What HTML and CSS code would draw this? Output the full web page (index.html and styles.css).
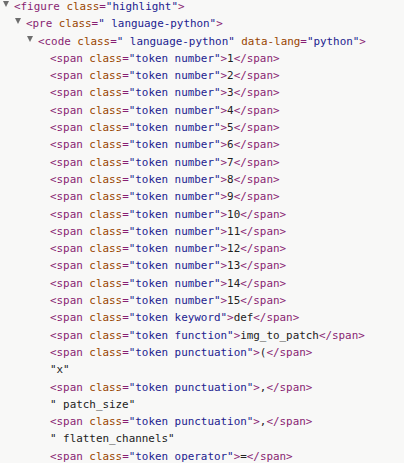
FILE: index.html
```html
<!DOCTYPE html>
<html>
<head>
<meta charset="utf-8">
<link rel="stylesheet" href="styles.css">
</head>
<body>
<div class="tree">
  <div class="row l0"><span class="tw"></span><span class="tg">&lt;figure</span> <span class="an">class</span><span class="tg">=</span><span class="av">"highlight"</span><span class="tg">&gt;</span></div>
  <div class="row l1"><span class="tw"></span><span class="tg">&lt;pre</span> <span class="an">class</span><span class="tg">=</span><span class="av">" language-python"</span><span class="tg">&gt;</span></div>
  <div class="row l2"><span class="tw"></span><span class="tg">&lt;code</span> <span class="an">class</span><span class="tg">=</span><span class="av">" language-python"</span> <span class="an">data-lang</span><span class="tg">=</span><span class="av">"python"</span><span class="tg">&gt;</span></div>
  <div class="row l3"><span class="tg">&lt;span</span> <span class="an">class</span><span class="tg">=</span><span class="av">"token number"</span><span class="tg">&gt;</span>1<span class="tg">&lt;/span&gt;</span></div>
  <div class="row l3"><span class="tg">&lt;span</span> <span class="an">class</span><span class="tg">=</span><span class="av">"token number"</span><span class="tg">&gt;</span>2<span class="tg">&lt;/span&gt;</span></div>
  <div class="row l3"><span class="tg">&lt;span</span> <span class="an">class</span><span class="tg">=</span><span class="av">"token number"</span><span class="tg">&gt;</span>3<span class="tg">&lt;/span&gt;</span></div>
  <div class="row l3"><span class="tg">&lt;span</span> <span class="an">class</span><span class="tg">=</span><span class="av">"token number"</span><span class="tg">&gt;</span>4<span class="tg">&lt;/span&gt;</span></div>
  <div class="row l3"><span class="tg">&lt;span</span> <span class="an">class</span><span class="tg">=</span><span class="av">"token number"</span><span class="tg">&gt;</span>5<span class="tg">&lt;/span&gt;</span></div>
  <div class="row l3"><span class="tg">&lt;span</span> <span class="an">class</span><span class="tg">=</span><span class="av">"token number"</span><span class="tg">&gt;</span>6<span class="tg">&lt;/span&gt;</span></div>
  <div class="row l3"><span class="tg">&lt;span</span> <span class="an">class</span><span class="tg">=</span><span class="av">"token number"</span><span class="tg">&gt;</span>7<span class="tg">&lt;/span&gt;</span></div>
  <div class="row l3"><span class="tg">&lt;span</span> <span class="an">class</span><span class="tg">=</span><span class="av">"token number"</span><span class="tg">&gt;</span>8<span class="tg">&lt;/span&gt;</span></div>
  <div class="row l3"><span class="tg">&lt;span</span> <span class="an">class</span><span class="tg">=</span><span class="av">"token number"</span><span class="tg">&gt;</span>9<span class="tg">&lt;/span&gt;</span></div>
  <div class="row l3"><span class="tg">&lt;span</span> <span class="an">class</span><span class="tg">=</span><span class="av">"token number"</span><span class="tg">&gt;</span>10<span class="tg">&lt;/span&gt;</span></div>
  <div class="row l3"><span class="tg">&lt;span</span> <span class="an">class</span><span class="tg">=</span><span class="av">"token number"</span><span class="tg">&gt;</span>11<span class="tg">&lt;/span&gt;</span></div>
  <div class="row l3"><span class="tg">&lt;span</span> <span class="an">class</span><span class="tg">=</span><span class="av">"token number"</span><span class="tg">&gt;</span>12<span class="tg">&lt;/span&gt;</span></div>
  <div class="row l3"><span class="tg">&lt;span</span> <span class="an">class</span><span class="tg">=</span><span class="av">"token number"</span><span class="tg">&gt;</span>13<span class="tg">&lt;/span&gt;</span></div>
  <div class="row l3"><span class="tg">&lt;span</span> <span class="an">class</span><span class="tg">=</span><span class="av">"token number"</span><span class="tg">&gt;</span>14<span class="tg">&lt;/span&gt;</span></div>
  <div class="row l3"><span class="tg">&lt;span</span> <span class="an">class</span><span class="tg">=</span><span class="av">"token number"</span><span class="tg">&gt;</span>15<span class="tg">&lt;/span&gt;</span></div>
  <div class="row l3"><span class="tg">&lt;span</span> <span class="an">class</span><span class="tg">=</span><span class="av">"token keyword"</span><span class="tg">&gt;</span>def<span class="tg">&lt;/span&gt;</span></div>
  <div class="row l3"><span class="tg">&lt;span</span> <span class="an">class</span><span class="tg">=</span><span class="av">"token function"</span><span class="tg">&gt;</span>img_to_patch<span class="tg">&lt;/span&gt;</span></div>
  <div class="row l3"><span class="tg">&lt;span</span> <span class="an">class</span><span class="tg">=</span><span class="av">"token punctuation"</span><span class="tg">&gt;</span>(<span class="tg">&lt;/span&gt;</span></div>
  <div class="row l3 txt">"x"</div>
  <div class="row l3"><span class="tg">&lt;span</span> <span class="an">class</span><span class="tg">=</span><span class="av">"token punctuation"</span><span class="tg">&gt;</span>,<span class="tg">&lt;/span&gt;</span></div>
  <div class="row l3 txt">" patch_size"</div>
  <div class="row l3"><span class="tg">&lt;span</span> <span class="an">class</span><span class="tg">=</span><span class="av">"token punctuation"</span><span class="tg">&gt;</span>,<span class="tg">&lt;/span&gt;</span></div>
  <div class="row l3 txt">" flatten_channels"</div>
  <div class="row l3"><span class="tg">&lt;span</span> <span class="an">class</span><span class="tg">=</span><span class="av">"token operator"</span><span class="tg">&gt;</span>=<span class="tg">&lt;/span&gt;</span></div>
</div>
</body>
</html>
```

FILE: styles.css
```css
html, body {
  margin: 0;
  padding: 0;
  background: #f8f8f7;
}
.tree {
  font-family: "DejaVu Sans Mono", "Liberation Mono", monospace;
  font-size: 10.9px;
  color: #222222;
  margin-top: -2px;
}
.row {
  display: block;
  height: 17.3px;
  line-height: 17.3px;
  white-space: pre;
}
.l0 { padding-left: 3px; }
.l1 { padding-left: 15px; }
.l2 { padding-left: 27px; }
.l3 { padding-left: 50px; }
.tw {
  display: inline-block;
  width: 0;
  height: 0;
  border-left: 3px solid transparent;
  border-right: 3px solid transparent;
  border-top: 6px solid #6e6e6e;
  margin-right: 5px;
  vertical-align: 3px;
}
.tg { color: #881f72; }
.an { color: #994500; }
.av { color: #22228f; }
.txt { color: #222222; }
```
